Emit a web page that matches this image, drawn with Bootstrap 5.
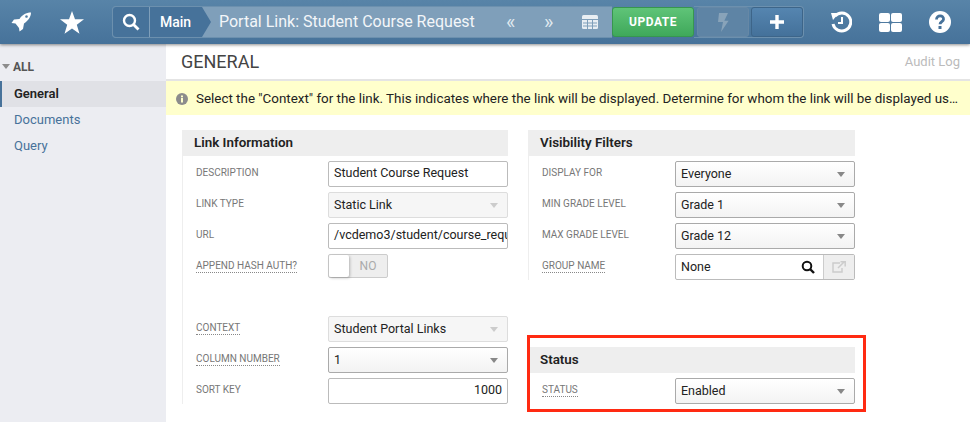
<!DOCTYPE html>
<html lang="en">
<head>
    <meta charset="UTF-8">
    <meta name="viewport" content="width=device-width, initial-scale=1.0">
    <title>Portal Link</title>
    <link href="https://cdn.jsdelivr.net/npm/bootstrap@5.3.2/dist/css/bootstrap.min.css" rel="stylesheet">
    <style>
        html, body { height: 422px; overflow: hidden; }
        body { font-family: Roboto, sans-serif; font-size: 13px; color: #222; background: #fff; }
        .top-bar { height: 44px; background: linear-gradient(#5884a8, #46729a); box-shadow: 0 1px 3px rgba(0,0,0,.45); position: relative; z-index: 2; }
        .top-icon { width: 34px; height: 32px; }
        .star-icon { margin-left: 17px; }
        .crumb-bar { width: 500px; height: 32px; margin-left: 23px; background: #7f9fba; border: 1px solid #6c90ae; border-right: 0; border-radius: 4px 0 0 4px; }
        .crumb-search { width: 37px; background: #46729a; border-right: 1px solid #7f9fba; border-radius: 3px 0 0 3px; }
        .crumb-main { width: 52px; background: #46729a; color: #fff; font-size: 14px; font-weight: 500; padding-left: 10px; }
        .crumb-arrow { width: 0; height: 0; border-top: 15px solid transparent; border-bottom: 15px solid transparent; border-left: 9px solid #46729a; }
        .crumb-title { width: 295px; color: #f3f6f9; font-size: 16px; padding-left: 8px; white-space: nowrap; }
        .crumb-tools { padding-right: 14px; }
        .crumb-btn { color: #dfe8ef; font-size: 20px; line-height: 1; }
        .btn-update { width: 82px; height: 30px; background: linear-gradient(#5fc478, #3fa85a); border: 1px solid #37964f; border-radius: 3px; color: #fff; font-size: 12px; font-weight: 700; letter-spacing: .5px; }
        .action-group { height: 32px; width: 110px; border: 1px solid #6c90ae; border-left: 0; border-radius: 0 4px 4px 0; padding: 0 0 0 3px; gap: 2px; }
        .btn-flash { width: 52px; height: 30px; background: #5e84a5; border: 1px solid #6688a6; border-radius: 3px; }
        .btn-plus { width: 52px; height: 30px; background: linear-gradient(#5585b0, #44719a); border: 1px solid #3d6589; border-radius: 3px; }
        .right-icons { margin-left: 26px; gap: 27px; }
        .page-body { height: 378px; }
        .side-nav { width: 166px; background: #ecedf2; padding-top: 16px; flex-shrink: 0; }
        .side-all { font-size: 12px; font-weight: 700; color: #555; height: 15px; line-height: 15px; padding-left: 2px; margin-bottom: 6px; }
        .side-caret { display: inline-block; border-left: 4px solid transparent; border-right: 4px solid transparent; border-top: 5px solid #8c8c8c; margin-right: 3px; vertical-align: 2px; }
        .side-link { height: 26px; line-height: 26px; padding-left: 14px; color: #47729a; font-size: 13px; }
        .side-link.is-on { background: #e0e1e6; border-left: 2px solid #47729a; padding-left: 12px; color: #222; font-weight: 600; }
        .main-pane { flex: 1; min-width: 0; }
        .page-head { height: 35px; padding: 7px 10px 0 15px; }
        .page-title { font-size: 18px; color: #444; line-height: 22px; }
        .audit-link { font-size: 13px; color: #bbb; line-height: 22px; }
        .help-bar { height: 36px; background: #ffffcc; border-top: 2px solid #e4e4e4; padding: 2px 10px 0; white-space: nowrap; overflow: hidden; font-size: 13.4px; color: #222; gap: 8px; }
        .form-cols { padding: 15px 0 0 16px; gap: 20px; }
        .form-col { width: 326px; }
        .form-col.is-right { width: 327px; }
        .section-head { height: 26px; line-height: 26px; background: #eee; padding-left: 12px; font-size: 13.4px; font-weight: 600; color: #222; }
        .section-body { border-left: 1px solid #eee; padding: 5px 0 0 13px; }
        .field-row { height: 26px; margin-bottom: 5px; }
        .field-gap { height: 31px; }
        .field-label { width: 132px; font-size: 10px; color: #777; flex-shrink: 0; align-self: flex-start; padding-top: 4px; }
        .is-right .field-label { width: 133px; }
        .has-tip span { border-bottom: 1px dotted #888; padding-bottom: 1px; }
        .fake-input { width: 180px; height: 26px; line-height: 22px; border: 1px solid #bbb; border-radius: 2px; padding: 0 5px; font-size: 12.5px; white-space: nowrap; overflow: hidden; background: #fff; }
        .fake-select { background: linear-gradient(#fff, #f3f3f3); border-color: #aaa; }
        .fake-select.is-off { background: #f6f6f6; border-color: #ddd; }
        .select-caret { border-left: 4px solid transparent; border-right: 4px solid transparent; border-top: 5px solid #888; }
        .is-off .select-caret { border-top-color: #ccc; }
        .toggle-box { width: 60px; height: 24px; border: 1px solid #ccc; border-radius: 2px; background: #eee; font-size: 12px; color: #aaa; }
        .toggle-knob { width: 20px; height: 22px; background: #fff; border-radius: 2px; box-shadow: 1px 1px 3px rgba(0,0,0,.25); }
        .lookup-btn { width: 31px; height: 24px; background: #eee; border-left: 1px solid #ccc; }
        .status-wrap { margin-top: 67px; position: relative; }
        .red-box { position: absolute; left: -1px; top: -12px; width: 339px; height: 77px; border: 3px solid #ff2a12; pointer-events: none; }
    </style>
</head>
<body>

<!-- Top bar -->
<div class="top-bar d-flex align-items-center">
    <div class="top-icon d-flex align-items-center justify-content-center ms-1">
        <svg width="20" height="20" viewBox="0 0 20 20"><path fill-rule="evenodd" d="M20 .5C15 .5 11 3 8.500 7L3 7.500.5 11l4 .5L8 16l.5 3.500 3.500-2.500 1-5.500C17 9 20 5 20 .5zM15.500 3.200a1.300 1.300 0 1 0 .01 0z" fill="#fff"/></svg>
    </div>
    <div class="top-icon star-icon d-flex align-items-center justify-content-center">
        <svg width="24" height="23" viewBox="0 0 24 23"><path d="M12 0l3 8.3h9l-7.2 5.400 2.700 9L12 17.400 4.500 22.700l2.700-9L0 8.300h9z" fill="#fff"/></svg>
    </div>
    <div class="crumb-bar d-flex align-items-stretch">
        <div class="crumb-search d-flex align-items-center justify-content-center">
            <svg width="18" height="18" viewBox="0 0 18 18"><circle cx="7.500" cy="7.500" r="5.500" fill="none" stroke="#fff" stroke-width="2.400"/><path d="M11.500 11.500l5 5" stroke="#fff" stroke-width="2.800"/></svg>
        </div>
        <div class="crumb-main d-flex align-items-center">Main</div>
        <div class="crumb-arrow"></div>
        <div class="crumb-title d-flex align-items-center">Portal Link: Student Course Request</div>
        <div class="crumb-tools d-flex align-items-center flex-grow-1 justify-content-between">
            <span class="crumb-btn">«</span>
            <span class="crumb-btn">»</span>
            <svg width="16" height="14" viewBox="0 0 16 14"><rect width="16" height="14" rx="1.500" fill="#e8eef3"/><path d="M0 4.500h16M1 8h14M1 11h14M5.500 4v10M10.500 4v10" stroke="#7f9fba"/></svg>
        </div>
    </div>
    <button class="btn-update p-0">UPDATE</button>
    <div class="action-group d-flex align-items-center">
        <div class="btn-flash d-flex align-items-center justify-content-center">
            <svg width="11" height="19" viewBox="0 0 11 19"><path d="M1 0h9L6.300 7.700h4.300L3 19l2-10H0z" fill="#88a3b9"/></svg>
        </div>
        <div class="btn-plus d-flex align-items-center justify-content-center">
            <svg width="14" height="14" viewBox="0 0 14 14"><path d="M7 0v14M0 7h14" stroke="#fff" stroke-width="3.400"/></svg>
        </div>
    </div>
    <div class="right-icons d-flex align-items-center">
        <svg width="22" height="22" viewBox="0 0 22 22"><path d="M5 5a9 9 0 1 1-2 8" fill="none" stroke="#fff" stroke-width="3"/><path d="M1 2l8 0-6 7z" fill="#fff"/><path d="M12 6v6H8" fill="none" stroke="#fff" stroke-width="2"/></svg>
        <svg width="23" height="19" viewBox="0 0 23 19"><rect width="11" height="9" rx="2" fill="#fff"/><rect x="12" width="11" height="9" rx="2" fill="#fff"/><rect y="10" width="11" height="9" rx="2" fill="#fff"/><rect x="12" y="10" width="11" height="9" rx="2" fill="#fff"/></svg>
        <svg width="22" height="22" viewBox="0 0 22 22"><circle cx="11" cy="11" r="11" fill="#fff"/><path d="M7.500 8.500c0-5 7.500-4.500 7-.2-.2 2.200-3.500 2.500-3.500 5" fill="none" stroke="#47729a" stroke-width="2.800"/><rect x="9.500" y="15" width="3" height="3" fill="#47729a"/></svg>
    </div>
</div>

<div class="page-body d-flex">
    <!-- Side navigation -->
    <div class="side-nav">
        <div class="side-all"><span class="side-caret"></span>ALL</div>
        <div class="side-link is-on">General</div>
        <div class="side-link">Documents</div>
        <div class="side-link">Query</div>
    </div>

    <div class="main-pane">
        <div class="page-head d-flex justify-content-between">
            <div class="page-title">GENERAL</div>
            <div class="audit-link">Audit Log</div>
        </div>
        <div class="help-bar d-flex align-items-center">
            <svg class="flex-shrink-0" width="12" height="12" viewBox="0 0 12 12"><circle cx="6" cy="6" r="6" fill="#8c8c8c"/><rect x="5" y="5" width="2" height="4.500" fill="#ffffcc"/><rect x="5" y="2.500" width="2" height="1.800" fill="#ffffcc"/></svg>
            <span>Select the "Context" for the link. This indicates where the link will be displayed. Determine for whom the link will be displayed us…</span>
        </div>

        <div class="form-cols d-flex">
            <!-- Left column -->
            <div class="form-col">
                <div class="section-head">Link Information</div>
                <div class="section-body">
                    <div class="field-row d-flex"><div class="field-label">DESCRIPTION</div><div class="fake-input">Student Course Request</div></div>
                    <div class="field-row d-flex"><div class="field-label">LINK TYPE</div><div class="fake-input fake-select is-off d-flex align-items-center justify-content-between">Static Link<span class="select-caret me-1"></span></div></div>
                    <div class="field-row d-flex"><div class="field-label">URL</div><div class="fake-input">/vcdemo3/student/course_requ</div></div>
                    <div class="field-row d-flex"><div class="field-label has-tip"><span>APPEND HASH AUTH?</span></div>
                        <div class="toggle-box d-flex align-items-center"><div class="toggle-knob"></div><div class="flex-grow-1 text-center">NO</div></div>
                    </div>
                    <div class="field-gap"></div>
                    <div class="field-row d-flex"><div class="field-label has-tip"><span>CONTEXT</span></div><div class="fake-input fake-select is-off d-flex align-items-center justify-content-between">Student Portal Links<span class="select-caret me-1"></span></div></div>
                    <div class="field-row d-flex"><div class="field-label has-tip"><span>COLUMN NUMBER</span></div><div class="fake-input fake-select d-flex align-items-center justify-content-between">1<span class="select-caret me-1"></span></div></div>
                    <div class="field-row d-flex mb-0"><div class="field-label">SORT KEY</div><div class="fake-input text-end">1000</div></div>
                </div>
            </div>

            <!-- Right column -->
            <div class="form-col is-right">
                <div class="section-head">Visibility Filters</div>
                <div class="section-body">
                    <div class="field-row d-flex"><div class="field-label">DISPLAY FOR</div><div class="fake-input fake-select d-flex align-items-center justify-content-between">Everyone<span class="select-caret me-1"></span></div></div>
                    <div class="field-row d-flex"><div class="field-label">MIN GRADE LEVEL</div><div class="fake-input fake-select d-flex align-items-center justify-content-between">Grade 1<span class="select-caret me-1"></span></div></div>
                    <div class="field-row d-flex"><div class="field-label">MAX GRADE LEVEL</div><div class="fake-input fake-select d-flex align-items-center justify-content-between">Grade 12<span class="select-caret me-1"></span></div></div>
                    <div class="field-row d-flex mb-0"><div class="field-label has-tip"><span>GROUP NAME</span></div>
                        <div class="fake-input d-flex align-items-center justify-content-between pe-0">None
                            <div class="d-flex align-items-center gap-2">
                                <svg width="14" height="14" viewBox="0 0 14 14"><circle cx="6" cy="6" r="4.300" fill="none" stroke="#111" stroke-width="2"/><path d="M9 9l4 4" stroke="#111" stroke-width="2.400"/></svg>
                                <div class="lookup-btn d-flex align-items-center justify-content-center">
                                    <svg width="14" height="12" viewBox="0 0 14 12"><path d="M8 2H1v9h9V7" fill="none" stroke="#ccc" stroke-width="1.500"/><path d="M6 7l6-6M8.500 .8h4.700v4.700" fill="none" stroke="#ccc" stroke-width="1.500"/></svg>
                                </div>
                            </div>
                        </div>
                    </div>
                </div>
                <div class="status-wrap">
                    <div class="section-head">Status</div>
                    <div class="section-body">
                        <div class="field-row d-flex mb-0"><div class="field-label has-tip"><span>STATUS</span></div><div class="fake-input fake-select d-flex align-items-center justify-content-between">Enabled<span class="select-caret me-1"></span></div></div>
                    </div>
                    <div class="red-box"></div>
                </div>
            </div>
        </div>
    </div>
</div>

<script src="https://cdn.jsdelivr.net/npm/bootstrap@5.3.2/dist/js/bootstrap.bundle.min.js"></script>
</body>
</html>
